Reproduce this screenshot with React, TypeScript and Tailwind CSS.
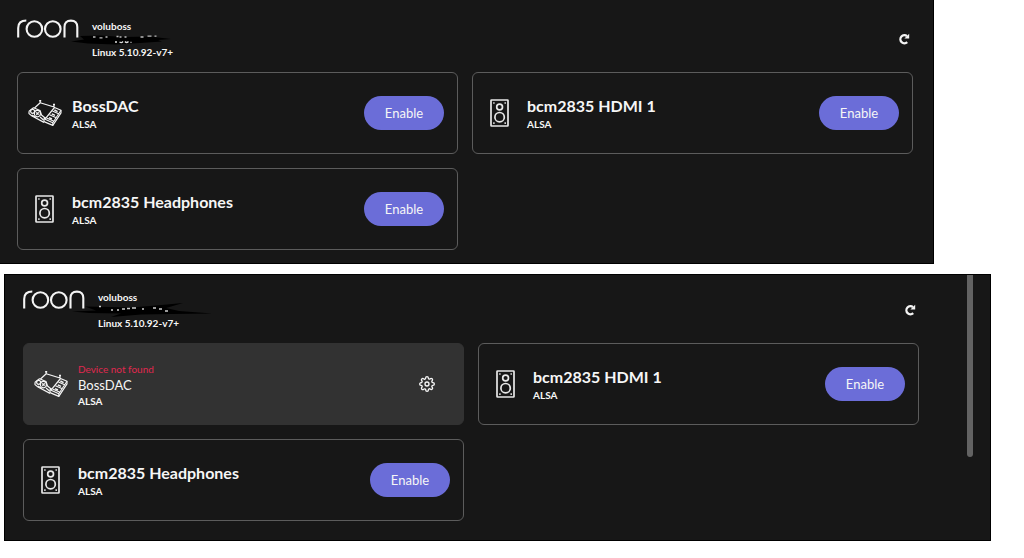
import type { ReactNode } from "react";
import { FiSettings } from "react-icons/fi";

function RoonLogo() {
  return (
    <svg viewBox="0 0 62 20" className="h-5 w-[62px] shrink-0" fill="none" stroke="#f4f4f4" strokeWidth="2.1" role="img" aria-label="roon">
      <path d="M1.200 18.600V9Q1.200 1.500 9.300 1.500" />
      <circle cx="17.4" cy="10" r="7.8" />
      <circle cx="35.8" cy="10" r="7.800" />
      <path d="M47.5 18.6V8Q47.5 1.6 53.9 1.6T60.3 8V18.6" />
    </svg>
  );
}

function BoardIcon() {
  return (
    <svg viewBox="0 0 34 28" className="h-7 w-[34px]" fill="none" stroke="#f4f4f4" strokeWidth="1.2" strokeLinejoin="round" aria-hidden="true">
      <path d="M6.500 9 12.200 3.800 26 8M12.200 3.800V1.200M26 8V5M1 12.200 5.500 8.800 12 11.500 13.500 16 18 19.800M1 12.200V14.600L4 17 16 23.400" />
      <path d="M11.200 1.800h2M25 5.500h2" strokeWidth="1.600" />
      <circle cx="4.6" cy="12.300" r="2" />
      <ellipse cx="9.400" cy="14.600" rx="3" ry="3.200" />
      <path d="M8 13.500 10.800 15.600M10.600 13 8.400 16.200M4 16 8 18.500M12 18 15.500 21" />
      <path d="M26.500 8.500 33 11.200V13.800L24.800 26.400 16 22.600V19.800L18 18.800Z" />
      <path d="M16 19.800 24.800 23.800 33 11.200M24.800 23.800V26.400M24.400 12 30.600 14.800M21.400 15.800 27.800 18.600M18.600 19 25.400 22" strokeWidth="1.100" />
      <path d="M26.400 11 29.600 12.600M23.800 14.800 27 16.400M21 18.600 24 20" strokeWidth="1.500" />
    </svg>
  );
}

function SpeakerIcon() {
  return (
    <svg viewBox="0 0 19 28" className="mr-px h-7 w-[19px]" fill="none" stroke="#e8e8e8" strokeWidth="1.7" aria-hidden="true">
      <rect x="1" y="1" width="17" height="26" rx=".5" />
      <circle cx="9.600" cy="8" r="2.900" />
      <circle cx="9.600" cy="18.200" r="4.700" />
      <path d="M3.200 4h1.400M14.500 4h1.400M3.200 24.200h1.400M14.500 24.200h1.400" />
    </svg>
  );
}

function RefreshIcon() {
  return (
    <svg viewBox="0 0 12 12" className="size-3" fill="none" stroke="#f4f4f4" strokeWidth="2.3" aria-hidden="true">
      <path d="M9 3.2A4 4 0 1 0 9.2 9.1" />
      <path d="M11.2.8V5.6H6.4Z" fill="#f4f4f4" stroke="none" />
    </svg>
  );
}

function ScribbleOne() {
  return (
    <svg viewBox="0 0 104 12" className="absolute -left-[22px] top-px h-3 w-[104px]" fill="none" aria-hidden="true">
      <path d="M1 7.500 14 5.500 10 2 30 1.500 55 3 80 2.500 101 5 88 6 92 7.500 70 9 45 10.500 18 9.500Z" fill="#000" />
      <path d="M23 3h2.500m4 .8h3m3-.8h2m9-.5h2m1 .5h2m3 0h2m14 0h3m4-.8h4m3 0h2" stroke="#bbb" strokeWidth="1.300" />
      <path d="M45 8h2m2.500 0q2 1.500 3.500-.5m2 0q1.500 2 3.500 0m2 .8h1" stroke="#ddd" strokeWidth="1.300" />
    </svg>
  );
}

function ScribbleTwo() {
  return (
    <svg viewBox="0 0 142 16" className="absolute -top-px -left-[27px] h-4 w-[142px]" fill="none" aria-hidden="true">
      <path d="M1 8.500 25 7.500 14 3.500 60 4.500 85 2.500 112 0 95 5 108 8 141 10.500 100 11 70 11.500 40 14 50 10.500 18 10Z" fill="#000" />
      <path d="M28 3.500h2m10 3.500h2m4 0h2m3-1h3m2-.5h3m2-.5h4m6 1h2m9-1h3m3 1h3m3 2h3" stroke="#ccc" strokeWidth="1.300" />
    </svg>
  );
}

function Header({ scribble }: { scribble: ReactNode }) {
  return (
    <header className="flex items-start gap-[13px]">
      <RoonLogo />
      <div className="flex-1 pt-px text-[10px] leading-[13px] font-bold">
        <p>voluboss</p>
        <div className="relative h-[13px]">{scribble}</div>
        <p>Linux 5.10.92-v7+</p>
      </div>
      <button type="button" aria-label="Refresh" className="mt-[14px] mr-[3px]">
        <RefreshIcon />
      </button>
    </header>
  );
}

type CardProps = { name: string; board?: boolean; missing?: boolean };

function DeviceCard({ name, board, missing }: CardProps) {
  return (
    <article
      className={
        missing
          ? "flex h-[82px] items-center rounded-md border border-[#323232] bg-[#323232] pr-[13px] pl-[10px]"
          : "flex h-[82px] items-center rounded-md border border-[#5c5c5c] pr-[13px] pl-[10px]"
      }
    >
      <div className="flex w-[34px] shrink-0 justify-center">{board ? <BoardIcon /> : <SpeakerIcon />}</div>
      <div className={missing ? "ml-[10px] min-w-0 flex-1 pt-px" : "ml-[10px] min-w-0 flex-1 pt-[2px]"}>
        {missing && <p className="text-[10px] leading-4 text-[#e0284f]">Device not found</p>}
        <h2 className={missing ? "text-[13px] leading-4" : "text-[16px] leading-5 font-bold"}>{name}</h2>
        <p className="text-[10px] leading-4 font-bold">ALSA</p>
      </div>
      {missing ? (
        <button type="button" aria-label="Device settings" className="mr-[15px]">
          <FiSettings className="size-4" />
        </button>
      ) : (
        <button type="button" className="h-[34px] w-20 rounded-full bg-[#6b6dd8] pt-[2px] text-[13px]">
          Enable
        </button>
      )}
    </article>
  );
}

function DeviceGrid({ missing }: { missing?: boolean }) {
  return (
    <div className="mt-[13px] grid grid-cols-2 gap-[14px]">
      <DeviceCard name="BossDAC" board missing={missing} />
      <DeviceCard name="bcm2835 HDMI 1" />
      <DeviceCard name="bcm2835 Headphones" />
    </div>
  );
}

export default function App() {
  return (
    <main className="min-h-screen bg-white font-['Lato',sans-serif] text-[#f6f6f6]">
      <section className="mr-[90px] border-r border-b border-black bg-[#171717] pt-[19px] pr-5 pb-[13px] pl-[17px]">
        <Header scribble={<ScribbleOne />} />
        <DeviceGrid />
      </section>
      <section className="mt-[10px] mr-[33px] ml-1 flex border border-black bg-[#171717] pl-[18px]">
        <div className="flex-1 pt-[15px] pb-[19px]">
          <Header scribble={<ScribbleTwo />} />
          <DeviceGrid missing />
        </div>
        <div className="mr-[17px] ml-12 h-[182px] w-[6px] rounded-b-full bg-[#636363]" />
      </section>
    </main>
  );
}
